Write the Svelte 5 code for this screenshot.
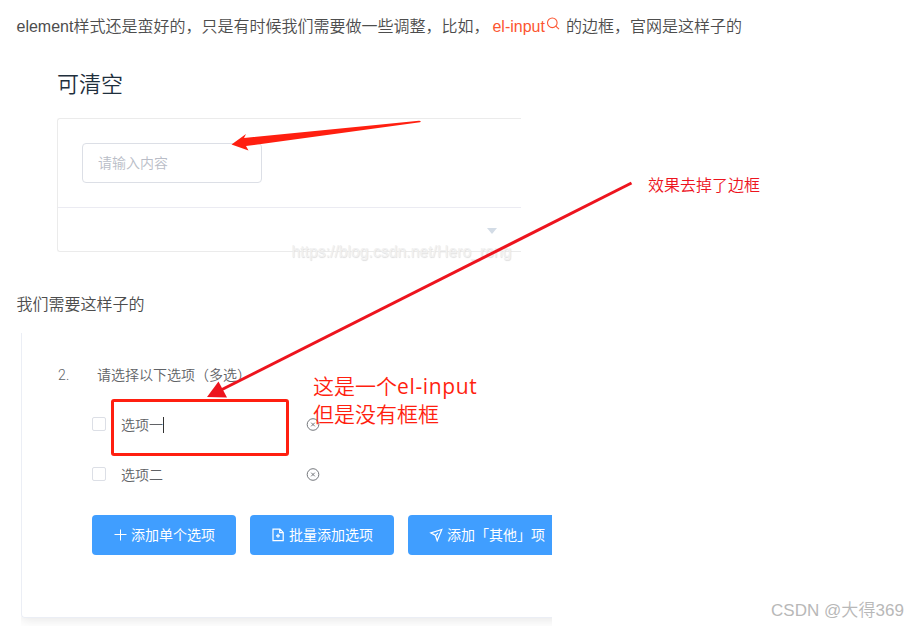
<script>
  const options = ['选项一', '选项二'];
</script>

<main class="article">
  <p class="lead">element样式还是蛮好的，只是有时候我们需要做一些调整，比如，<a class="term" href="#el-input">el-input<svg width="14" height="14" viewBox="0 0 14 14" fill="none" stroke="#fc5531" stroke-width="1.1"><circle cx="6.3" cy="5.8" r="4.8" /><path d="M9.8 9.2 13 12.2" /></svg></a><span>的边框，官网是这样子的</span></p>

  <section class="shot first">
    <h3>可清空</h3>
    <div class="demo">
      <div class="source"><input class="field" placeholder="请输入内容" /></div>
      <div class="control"><i class="caret"></i></div>
    </div>
    <span class="watermark">https://blog.csdn.net/Hero_rong</span>
    <svg class="arrow-one" width="192" height="34" viewBox="230 118 192 34">
      <path fill="#ff1f10" d="M231.5 144.5 246 134l-2 4L419 120.8q3 .2 1 1.4L246 146l2.5 4.5Z" />
    </svg>
  </section>

  <p class="second">我们需要这样子的</p>

  <section class="shot form">
    <div class="card">
      <div class="question"><span class="num">2.</span><span>请选择以下选项（多选）</span></div>
      {#each options as option, i}
        <div class="option">
          <i class="box"></i>
          <span class="label">{option}{#if i === 0}<i class="cursor"></i>{/if}</span>
          <svg width="14" height="14" viewBox="0 0 14 14" fill="none" stroke="#74777c"><circle cx="7" cy="7.5" r="5.8" /><path d="m5.2 5.7 3.6 3.6m0-3.6-3.6 3.6" /></svg>
        </div>
      {/each}
      <div class="buttons">
        <button>
          <svg width="14" height="14" viewBox="0 0 14 14" fill="none" stroke="#fff"><path d="M7.5 1.5v11M1.5 6.5h12" /></svg><span>添加单个选项</span>
        </button>
        <button>
          <svg width="14" height="14" viewBox="0 0 14 14" fill="none" stroke="#fff" stroke-width="1.2"><path d="M2 1.2h7l3.2 3.2v8.2H2ZM8.7 1.2v3.5h3.5M7 5.8v4M5 7.8h4" /></svg><span>批量添加选项</span>
        </button>
        <button>
          <svg width="14" height="14" viewBox="0 0 14 14" fill="none" stroke="#fff" stroke-width="1.2"><path d="M12.8 1.5 1.8 4.9l4.7 2.6 1.7 5.2ZM6.5 7.5l2.5-2.4" /></svg><span>添加「其他」项</span>
        </button>
      </div>
    </div>
    <div class="highlight"></div>
    <p class="note">这是一个<span>el-input</span><br />但是没有框框</p>
  </section>

  <svg class="pointer" width="908" height="626" viewBox="0 0 908 626">
    <path d="M631.5 183 221 390" stroke="#ed141e" stroke-width="3" />
    <path d="m207 397 11.5-15.5 8.5 16Z" fill="#ed141e" />
  </svg>
  <span class="effect">效果去掉了边框</span>
  <span class="signature">CSDN @大得369</span>
</main>

<style>
  :global(body) { margin: 0; background: #fff; }
  .article {
    position: relative;
    box-sizing: border-box;
    width: 908px;
    height: 626px;
    padding: 14px 0 0 16.5px;
    overflow: hidden;
    color: #4d4d4d;
    font: 350 16px/26px "Liberation Sans", "Noto Sans CJK SC", sans-serif;
    white-space: nowrap;
  }
  p, h3 { margin: 0; font-weight: 350; }
  .lead { height: 26px; display: flex; }
  .term { display: flex; margin: 0 6px 0 3px; color: #fc5531; text-decoration: none; }
  .term svg { margin: 3px 0 0 1px; }
  .shot { position: relative; }
  .first { margin-left: 40.5px; width: 464px; padding-top: 29px; }
  h3 { height: 32px; line-height: 32px; font-size: 22px; color: #1f2f3d; }
  .demo {
    box-sizing: border-box;
    height: 134px;
    margin-top: 17px;
    border: 1px solid #ebebeb;
    border-right: 0;
    border-radius: 3px 0 0 3px;
  }
  .source { box-sizing: border-box; height: 89px; padding: 24px; border-bottom: 1px solid #ebebf2; }
  .field {
    display: block;
    box-sizing: border-box;
    width: 180px;
    height: 40px;
    padding: 0 15px 2px;
    border: 1px solid #dcdfe6;
    border-radius: 4px;
    font: 350 14px "Noto Sans CJK SC", sans-serif;
  }
  .field::placeholder { color: #b9bdc7; opacity: 1; }
  .control { display: flex; justify-content: flex-end; padding: 20px 24px 0 0; }
  .caret { border: 5px solid transparent; border-top: 6px solid #d3dce6; border-bottom: 0; }
  .watermark { position: absolute; left: 234.5px; top: 199px; color: #f1f1f1; font-size: 16px; letter-spacing: -.1px; text-shadow: .5px .5px 1px #dedede; }
  .arrow-one { position: absolute; left: 173px; top: 78px; }
  .second { margin-top: 40px; height: 26px; }
  .form { margin: 15px 0 0 4.5px; width: 531px; height: 293px; overflow: hidden; color: #606266; font-size: 14px; }
  .card {
    box-sizing: border-box;
    width: 700px;
    height: 285px;
    padding: 29px 0 0 36px;
    border-left: 1px solid #ebeef5;
    border-bottom: 1px solid #ebeef5;
    border-radius: 0 0 0 4px;
    box-shadow: 0 2px 12px rgba(0, 0, 0, .1);
  }
  .question { display: flex; height: 26px; }
  .num { width: 39px; font-family: Roboto, sans-serif; font-weight: 300; letter-spacing: .3px; }
  .option { display: flex; align-items: center; height: 50px; margin-left: 34px; }
  .question + .option { margin-top: 11px; }
  .box { box-sizing: border-box; width: 14px; height: 14px; border: 1px solid #dcdfe6; border-radius: 2px; }
  .label { display: flex; align-items: center; width: 185px; margin: 1px 0 0 15px; }
  .option svg { margin-left: .2px; }
  .cursor { width: 1px; height: 16px; background: #333; }
  .buttons { display: flex; gap: 14px; margin: 16px 0 0 34px; }
  button {
    display: flex;
    flex: none;
    align-items: center;
    justify-content: center;
    gap: 4px;
    box-sizing: border-box;
    min-width: 144px;
    height: 40px;
    padding: 0 21px;
    border: 0;
    border-radius: 4px;
    background: #409eff;
    color: #fff;
    font: 400 14px "Noto Sans CJK SC", sans-serif;
  }
  button span { padding-bottom: 2px; }
  .highlight { position: absolute; left: 90px; top: 66px; box-sizing: border-box; width: 178px; height: 57px; border: 3px solid #ff1f10; border-radius: 3px; }
  .note { position: absolute; left: 292px; top: 38px; color: #ff1f10; font: 350 21px/28px "Noto Sans CJK SC", sans-serif; }
  .note span { font-family: "Open Sans", sans-serif; font-weight: 400; line-height: 1; letter-spacing: .65px; }
  .pointer { position: absolute; left: 0; top: 0; pointer-events: none; }
  .effect { position: absolute; left: 648px; top: 173px; color: #ed141e; }
  .signature { position: absolute; right: 4px; top: 598px; color: #b8b8b8; font-size: 17px; letter-spacing: .05px; }
</style>
